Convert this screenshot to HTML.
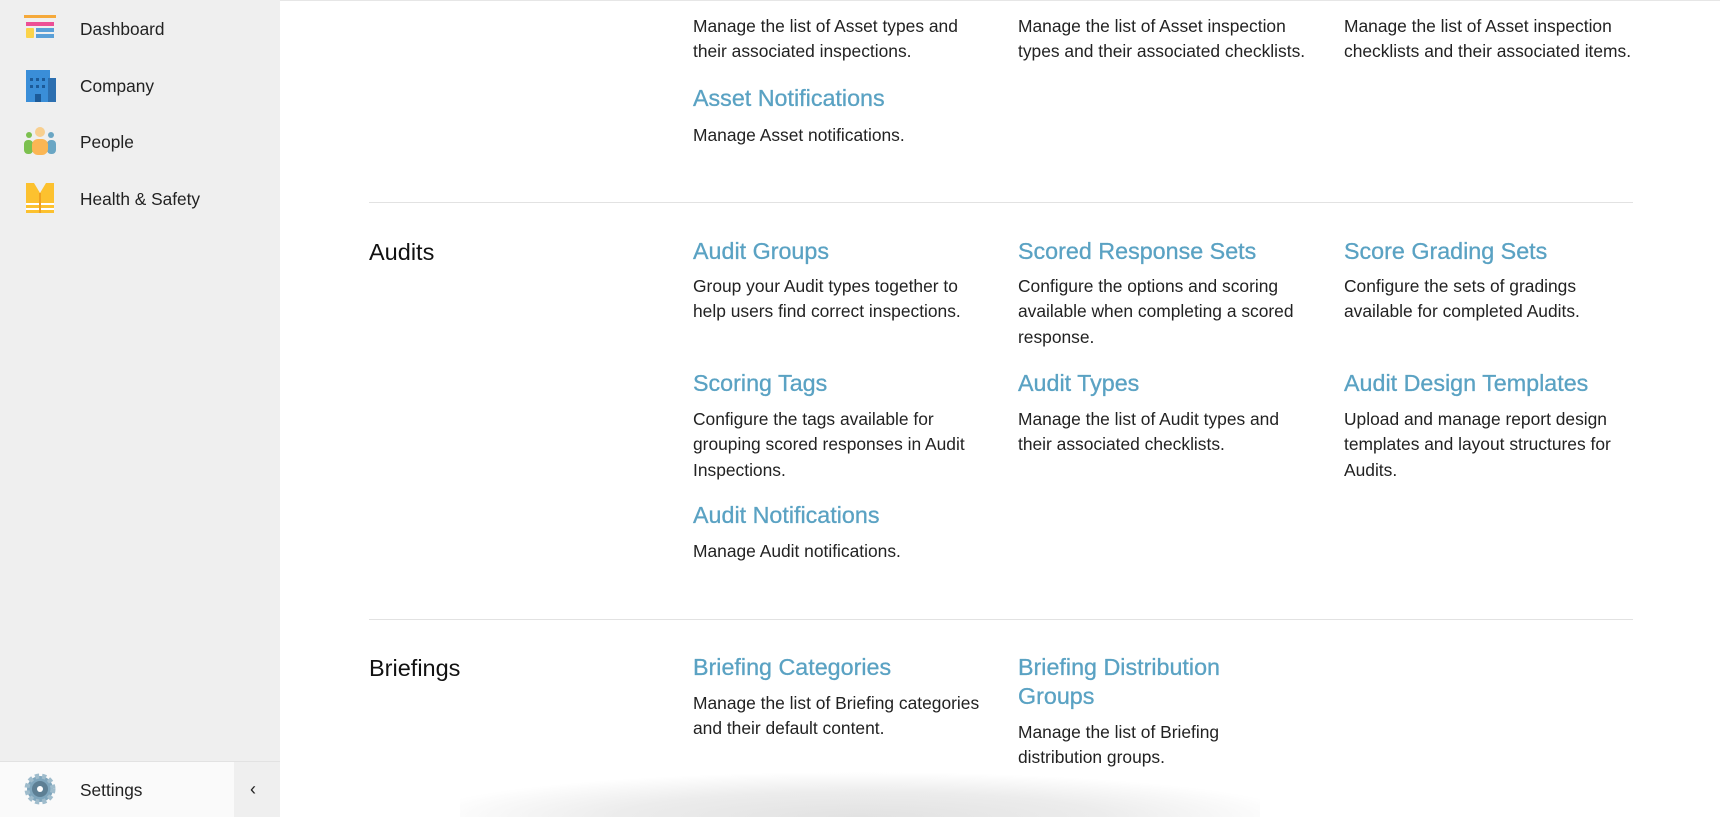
<!DOCTYPE html><html style="overflow:hidden;width:1720px;height:817px"><head><style>
html,body{overflow:hidden;}
body{margin:0;width:1720px;height:817px;position:relative;overflow:hidden;background:#fff;font-family:"Liberation Sans",sans-serif;}
.sb{position:absolute;left:0;top:0;width:280px;height:817px;background:#efefef;}
.ni{position:absolute;left:80px;font-size:17.3px;color:#222;line-height:20px;}
.ic{position:absolute;left:24px;}
.h{position:absolute;font-size:23.3px;color:#5aa2c3;line-height:29px;white-space:nowrap;-webkit-text-stroke:0.3px #5aa2c3;}
.p{position:absolute;font-size:17.4px;color:#222;line-height:25.3px;width:295px;}
.s{position:absolute;left:369px;font-size:23.5px;color:#111;line-height:28px;}
.hr{position:absolute;left:369px;width:1264px;height:1px;background:#e2e2e2;}
</style></head><body>
<div style="position:absolute;left:280px;top:0;right:0;height:1px;background:#e6e6e6"></div>
<div style="position:absolute;left:460px;top:772px;width:800px;height:45px;background:radial-gradient(ellipse 55% 100% at 50% 100%,#e2e2e2 0%,#ececec 55%,rgba(255,255,255,0) 100%)"></div>
<div class="sb">
<svg class="ic" style="top:15px" width="32" height="26" viewBox="0 0 32 26"><rect x="0" y="0" width="32" height="3" fill="#f5a93a"/><rect x="2" y="7" width="28" height="4" fill="#ec4f95"/><rect x="2" y="13" width="8" height="10" rx="1" fill="#fbd34a"/><rect x="12" y="13" width="18" height="4" fill="#5aa0d8"/><rect x="12" y="19" width="18" height="4" fill="#5aa0d8"/></svg>
<div class="ni" style="top:19px">Dashboard</div>
<svg class="ic" style="top:70px" width="32" height="32" viewBox="0 0 32 32"><rect x="2" y="0" width="24" height="32" fill="#3a8ed8"/><rect x="24" y="8" width="8" height="24" fill="#2c6fb0"/><g fill="#1c5a98"><rect x="6" y="8" width="3" height="3"/><rect x="12" y="8" width="3" height="3"/><rect x="18" y="8" width="3" height="3"/><rect x="6" y="15" width="3" height="3"/><rect x="12" y="15" width="3" height="3"/><rect x="18" y="15" width="3" height="3"/><rect x="11" y="24" width="6" height="8"/></g></svg>
<div class="ni" style="top:76px">Company</div>
<svg class="ic" style="top:127px" width="32" height="28" viewBox="0 0 32 28"><circle cx="5" cy="8" r="3" fill="#7cc04f"/><rect x="0" y="13" width="9" height="14" rx="4" fill="#7cc04f"/><circle cx="27" cy="8" r="3" fill="#6aa6c4"/><rect x="23" y="13" width="9" height="14" rx="4" fill="#6aa6c4"/><circle cx="16" cy="5" r="5" fill="#f8cf8f"/><rect x="8" y="12" width="16" height="16" rx="6" fill="#fbb654"/></svg>
<div class="ni" style="top:132px">People</div>
<svg class="ic" style="top:181px" width="32" height="32" viewBox="0 0 32 32"><path d="M2 2h8l6 10 6-10h8v30H2z" fill="#fcc12f"/><rect x="2" y="22" width="28" height="2" fill="#fff"/><rect x="2" y="27" width="28" height="2" fill="#fff"/><path d="M15 12h2v20h-2z" fill="#f0a020"/></svg>
<div class="ni" style="top:189px">Health &amp; Safety</div>
<div style="position:absolute;left:0;top:761px;width:280px;height:1px;background:#e2e2e2"></div>
<div style="position:absolute;left:0;top:762px;width:234px;height:55px;background:#fafafa"></div>
<svg style="position:absolute;left:24px;top:773px" width="32" height="32" viewBox="0 0 32 32"><circle cx="16" cy="16" r="13" fill="#7fa6bd" stroke="#9fbccc" stroke-width="5" stroke-dasharray="4 3"/><circle cx="16" cy="16" r="8" fill="#5d7f94"/><circle cx="16" cy="16" r="3" fill="#fff"/></svg>
<div class="ni" style="top:780px">Settings</div>
<div style="position:absolute;left:250px;top:778px;font-size:18px;line-height:22px;color:#222">&#8249;</div>
</div>

<div class="p" style="left:693px;top:14px">Manage the list of Asset types and their associated inspections.</div>
<div class="p" style="left:1018px;top:14px">Manage the list of Asset inspection types and their associated checklists.</div>
<div class="p" style="left:1344px;top:14px">Manage the list of Asset inspection checklists and their associated items.</div>
<div class="h" style="left:693px;top:84px">Asset Notifications</div>
<div class="p" style="left:693px;top:123px">Manage Asset notifications.</div>
<div class="hr" style="top:202px"></div>

<div class="s" style="top:238px">Audits</div>
<div class="h" style="left:693px;top:237px">Audit Groups</div>
<div class="h" style="left:1018px;top:237px">Scored Response Sets</div>
<div class="h" style="left:1344px;top:237px">Score Grading Sets</div>
<div class="p" style="left:693px;top:274px">Group your Audit types together to help users find correct inspections.</div>
<div class="p" style="left:1018px;top:274px;width:290px">Configure the options and scoring available when completing a scored response.</div>
<div class="p" style="left:1344px;top:274px">Configure the sets of gradings available for completed Audits.</div>
<div class="h" style="left:693px;top:369px">Scoring Tags</div>
<div class="h" style="left:1018px;top:369px">Audit Types</div>
<div class="h" style="left:1344px;top:369px">Audit Design Templates</div>
<div class="p" style="left:693px;top:407px;width:290px">Configure the tags available for grouping scored responses in Audit Inspections.</div>
<div class="p" style="left:1018px;top:407px">Manage the list of Audit types and their associated checklists.</div>
<div class="p" style="left:1344px;top:407px;width:290px">Upload and manage report design templates and layout structures for Audits.</div>
<div class="h" style="left:693px;top:501px">Audit Notifications</div>
<div class="p" style="left:693px;top:539px">Manage Audit notifications.</div>
<div class="hr" style="top:619px"></div>

<div class="s" style="top:654px">Briefings</div>
<div class="h" style="left:693px;top:653px">Briefing Categories</div>
<div class="p" style="left:693px;top:691px">Manage the list of Briefing categories and their default content.</div>
<div class="h" style="left:1018px;top:653px;line-height:29px">Briefing Distribution<br>Groups</div>
<div class="p" style="left:1018px;top:720px;width:260px">Manage the list of Briefing distribution groups.</div>
</body></html>
